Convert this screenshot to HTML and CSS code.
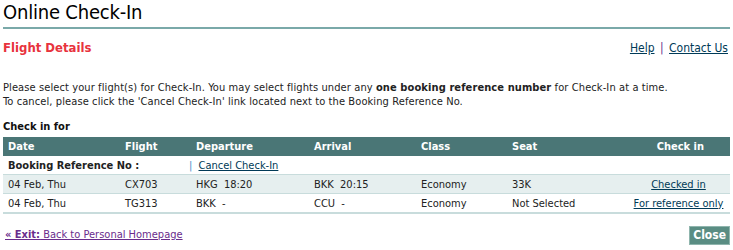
FILE: index.html
```html
<!DOCTYPE html>
<html>
<head>
<meta charset="utf-8">
<link rel="stylesheet" href="styles.css">
</head>
<body>
<div class="page">
  <h1 class="title">Online Check-In</h1>
  <div class="section-head">
    <h2 class="section-title">Flight Details</h2>
    <div class="toplinks"><a href="#">Help</a> <span class="sep">|</span> <a href="#">Contact Us</a></div>
  </div>
  <p class="intro">Please select your flight(s) for Check-In. You may select flights under any <b>one booking reference number</b> for Check-In at a time.<br>To cancel, please click the 'Cancel Check-In' link located next to the Booking Reference No.</p>
  <h3 class="sub">Check in for</h3>
  <table class="flights">
    <colgroup>
      <col class="c-date"><col class="c-flight"><col class="c-dep"><col class="c-arr"><col class="c-class"><col class="c-seat"><col class="c-check">
    </colgroup>
    <thead>
      <tr><th>Date</th><th>Flight</th><th>Departure</th><th>Arrival</th><th>Class</th><th>Seat</th><th class="th-check">Check in</th></tr>
    </thead>
    <tbody>
      <tr class="ref-row"><td colspan="2" class="ref-label">Booking Reference No :</td><td colspan="5" class="ref-action"><span class="bar">|</span> <a href="#">Cancel Check-In</a></td></tr>
      <tr class="alt"><td>04 Feb, Thu</td><td>CX703</td><td>HKG&nbsp; 18:20</td><td>BKK&nbsp; 20:15</td><td>Economy</td><td>33K</td><td class="td-check"><a href="#">Checked in</a></td></tr>
      <tr class="last"><td>04 Feb, Thu</td><td>TG313</td><td>BKK&nbsp; -</td><td>CCU&nbsp; -</td><td>Economy</td><td>Not Selected</td><td class="td-check"><a href="#">For reference only</a></td></tr>
    </tbody>
  </table>
  <div class="footer">
    <a href="#" class="exit"><b>« Exit:</b> Back to Personal Homepage</a>
    <button class="close">Close</button>
  </div>
</div>
</body>
</html>
```
FILE: styles.css
```css
html, body { margin: 0; padding: 0; background: #fff; }
body { font-family: "DejaVu Sans Condensed", "DejaVu Sans", sans-serif; font-size: 11px; color: #222; }
.page { padding: 0 3px; width: 727px; }
.title { font-family: "DejaVu Sans Condensed", "DejaVu Sans", sans-serif; font-weight: normal; font-size: 20px; color: #000; margin: 0; padding: 1px 0 4px; border-bottom: 2px solid #7aa9a9; line-height: 22px; letter-spacing: -0.2px; }
.section-head { display: flex; justify-content: space-between; align-items: center; margin-top: 11px; }
.section-title { margin: 0; font-size: 13px; color: #e8333d; font-weight: bold; }
.toplinks { font-size: 12px; padding-right: 2px; }
.toplinks a { color: #003a57; }
.sep { color: #6a2c8c; margin: 0 2px; }
.intro { margin: 26px 0 0; line-height: 14px; color: #222; letter-spacing: 0.1px; }
.sub { font-size: 11px; font-weight: bold; margin: 11px 0 4px; color: #111; }
.flights { width: 100%; border-collapse: collapse; }
.c-date { width: 117px; } .c-flight { width: 71px; } .c-dep { width: 118px; } .c-arr { width: 107px; } .c-class { width: 91px; } .c-seat { width: 116px; }
.flights th { background: #4a7676; color: #fff; text-align: left; font-weight: bold; font-size: 11px; padding: 3px 5px; height: 13px; }
.flights th.th-check { text-align: right; padding-right: 26px; }
.flights td { padding: 2px 5px; height: 14px; color: #222; }
.ref-row td { background: #fff; }
.ref-label { font-weight: bold; }
.flights td.ref-action { padding-left: 0; }
.bar { color: #4a90c8; margin-left: -2px; margin-right: 3px; }
.flights a { color: #003a57; }
.alt td { background: #e6efef; border-top: 1px solid #c8dcdc; }
.last td { border-top: 1px solid #c8dcdc; border-bottom: 2px solid #c8dcdc; }
.td-check { text-align: center; }
.flights td.td-check { padding-left: 9px; }
.footer { display: flex; justify-content: space-between; align-items: center; margin-top: 12px; }
.exit { color: #6a2c8c; font-size: 11px; margin-bottom: 3px; margin-left: 2px; }
.exit b { font-weight: bold; }
.close { font-family: inherit; font-size: 12px; font-weight: bold; color: #fff; background: #5a8d83; border: 1px solid #8fb5ad; padding: 1px 3px; margin-right: 0; line-height: 15px; cursor: pointer; }
```
